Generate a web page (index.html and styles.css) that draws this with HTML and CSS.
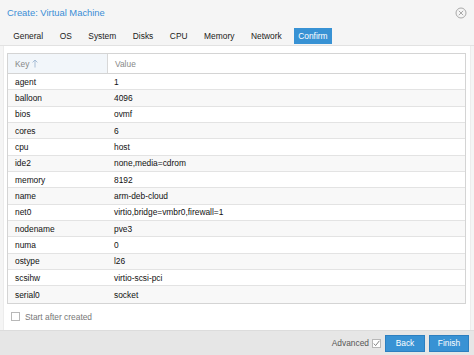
FILE: index.html
```html
<!DOCTYPE html>
<html>
<head>
<meta charset="utf-8">
<link rel="stylesheet" href="styles.css">
</head>
<body>
<div class="window">
  <div class="titlebar">
    <span class="title">Create: Virtual Machine</span>
    <svg class="close" width="12" height="12" viewBox="0 0 12 12"><circle cx="6" cy="6" r="5" fill="none" stroke="#a9a9a9" stroke-width="1"/><path d="M3.8 3.8 L8.2 8.2 M8.2 3.8 L3.8 8.2" stroke="#a9a9a9" stroke-width="1"/></svg>
  </div>
  <div class="tabs">
    <span class="tab">General</span>
    <span class="tab">OS</span>
    <span class="tab">System</span>
    <span class="tab">Disks</span>
    <span class="tab">CPU</span>
    <span class="tab">Memory</span>
    <span class="tab">Network</span>
    <span class="tab active">Confirm</span>
  </div>
  <div class="body">
    <div class="grid">
      <div class="ghead">
        <div class="hcell key sorted">Key <svg class="arrow" width="6" height="9" viewBox="0 0 6 9"><path d="M3 8.5 V1 M0.6 3.4 L3 1 L5.4 3.4" fill="none" stroke="#9fb8d2" stroke-width="0.9"/></svg></div>
        <div class="hcell">Value</div>
      </div>
      <div class="row"><div class="k">agent</div><div class="v">1</div></div>
      <div class="row alt"><div class="k">balloon</div><div class="v">4096</div></div>
      <div class="row"><div class="k">bios</div><div class="v">ovmf</div></div>
      <div class="row alt"><div class="k">cores</div><div class="v">6</div></div>
      <div class="row"><div class="k">cpu</div><div class="v">host</div></div>
      <div class="row alt"><div class="k">ide2</div><div class="v">none,media=cdrom</div></div>
      <div class="row"><div class="k">memory</div><div class="v">8192</div></div>
      <div class="row alt"><div class="k">name</div><div class="v">arm-deb-cloud</div></div>
      <div class="row"><div class="k">net0</div><div class="v">virtio,bridge=vmbr0,firewall=1</div></div>
      <div class="row alt"><div class="k">nodename</div><div class="v">pve3</div></div>
      <div class="row"><div class="k">numa</div><div class="v">0</div></div>
      <div class="row alt"><div class="k">ostype</div><div class="v">l26</div></div>
      <div class="row"><div class="k">scsihw</div><div class="v">virtio-scsi-pci</div></div>
      <div class="row alt"><div class="k">serial0</div><div class="v">socket</div></div>
    </div>
    <label class="start"><span class="cb"></span><span>Start after created</span></label>
  </div>
  <div class="footer">
    <span class="adv">Advanced</span>
    <span class="cb checked"><svg width="9" height="9" viewBox="0 0 9 9"><path d="M1.8 4.6 L3.6 6.6 L7.4 1.8" fill="none" stroke="#777" stroke-width="0.9"/></svg></span>
    <span class="btn back">Back</span>
    <span class="btn">Finish</span>
  </div>
</div>
</body>
</html>
```
FILE: styles.css
```css
* { box-sizing: border-box; }
html, body { margin: 0; padding: 0; }
body {
  font-family: "Liberation Sans", Arial, sans-serif;
  font-size: 8.4px;
  color: #111;
  background: #f5f5f5;
}
.window {
  width: 474px;
  height: 355px;
  display: flex;
  flex-direction: column;
  background: #f5f5f5;
}
.titlebar {
  height: 24px;
  display: flex;
  align-items: center;
  justify-content: space-between;
  padding: 1px 7px 0 7px;
}
.title {
  color: #3b8ed6;
  font-size: 9.4px;
}
.close { display: block; }
.tabs {
  height: 22px;
  display: flex;
  align-items: center;
  padding: 0 0 0 5px;
  border-bottom: 1px solid #e2e2e2;
}
.tab {
  margin: 0 4.15px;
  padding: 0 4.15px;
  height: 16px;
  line-height: 16px;
  color: #1a1a1a;
  position: relative;
  top: 1px;
}
.tab.active {
  background: #3892d4;
  color: #fff;
}
.body {
  flex: 1;
  background: #fff;
  padding: 7px 7px 0 7px;
  margin: 0 3px;
  border-left: 1px solid #ececec;
  border-right: 1px solid #ececec;
  display: flex;
  flex-direction: column;
}
.grid {
  border: 1px solid #d4d4d4;
  margin-left: -4px;
  margin-right: -3px;
}
.ghead {
  display: flex;
  height: 20px;
  border-bottom: 1px solid #d4d4d4;
}
.hcell {
  display: flex;
  align-items: center;
  padding-left: 7px;
  color: #888;
  flex: 1;
}
.hcell.key {
  flex: 0 0 100px;
  border-right: 1px solid #d8d8d8;
}
.hcell.sorted { background: #f2f6fa; }
.arrow { margin-left: 3px; display: block; }
.row {
  display: flex;
  height: 16.35px;
  align-items: center;
  border-bottom: 1px solid #e3e3e3;
}
.row:last-child { border-bottom: none; }
.row.alt { background: #f8f8f8; }
.k { flex: 0 0 100px; padding-left: 7px; }
.v { flex: 1; padding-left: 6px; }
.start {
  display: flex;
  align-items: center;
  margin-top: 8px;
  color: #777;
}
.cb {
  width: 9px;
  height: 9px;
  border: 1px solid #b8b8b8;
  background: #fff;
  display: inline-block;
  margin-right: 5px;
}
.footer {
  height: 25px;
  background: #e6e6e6;
  border-top: 1px solid #dcdcdc;
  display: flex;
  align-items: center;
  justify-content: flex-end;
  padding-right: 5px;
}
.adv { color: #555; margin-right: 3px; }
.footer .cb {
  margin-right: 4px;
  position: relative;
}
.footer .cb svg { position: absolute; left: -1px; top: -1px; }
.btn {
  width: 40px;
  height: 17px;
  line-height: 15px;
  text-align: center;
  color: #fff;
  background: #3892d4;
  border: 1px solid #2c7fc0;
}
.btn.back { margin-right: 4px; }
```
